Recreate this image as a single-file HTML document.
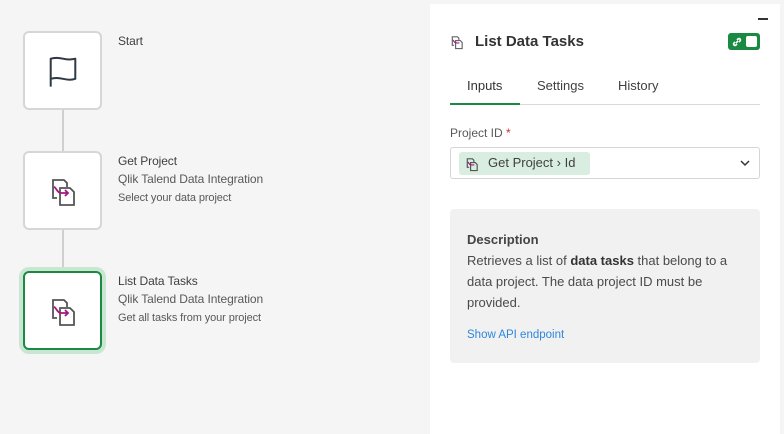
<!DOCTYPE html>
<html><head><style>
*{margin:0;padding:0;box-sizing:border-box}
body{width:784px;height:429px;background:#f5f5f5;font-family:"Liberation Sans",sans-serif;position:relative;overflow:hidden;color:#404040}
.box{position:absolute;left:23px;width:79px;height:79px;background:#fff;border:2px solid #d6d6d6;border-radius:6px;display:flex;align-items:center;justify-content:center}
.sel{border:2px solid #1a8a43;box-shadow:0 0 0 4px #c9e6d3}
.line{position:absolute;left:62px;width:2px;background:#cfcfcf}
.t{position:absolute;left:118px;font-size:12px;line-height:18px;color:#595959;letter-spacing:-0.1px}
.t b{color:#404040;font-weight:normal}
.panel{position:absolute;left:430px;top:4px;width:350px;height:430px;background:#fff}
.abs{position:absolute}
</style></head><body>
<div class="line" style="top:110px;height:42px"></div>
<div class="line" style="top:230px;height:42px"></div>
<div class="box" style="top:31px"><svg width="38" height="38" viewBox="0 0 34 34" fill="none" stroke="#2f3a45" stroke-width="1.8" stroke-linejoin="round"><path d="M6 31V6c3-1 7-1 11 0s7 1 11 0v18c-3 1-7 1-11 0s-8-1-11 0"/></svg></div>
<div class="box" style="top:151px"><svg width="34" height="34" viewBox="0 0 34 34" fill="none" stroke-width="1.8"><path d="M11 24H7V6h11l3 3v4" stroke="#555"/><path d="M14 14h10l4 4v13H14z" stroke="#555"/><path d="M8 13c2 0 3 6 7 6h7m-3-3 3 3-3 3" stroke="#a3177f"/></svg></div>
<div class="box sel" style="top:271px"><svg width="34" height="34" viewBox="0 0 34 34" fill="none" stroke-width="1.8"><path d="M11 24H7V6h11l3 3v4" stroke="#555"/><path d="M14 14h10l4 4v13H14z" stroke="#555"/><path d="M8 13c2 0 3 6 7 6h7m-3-3 3 3-3 3" stroke="#a3177f"/></svg></div>
<div class="t" style="top:32px"><b>Start</b></div>
<div class="t" style="top:152px"><b>Get Project</b><br>Qlik Talend Data Integration<br><span style="font-size:11px">Select your data project</span></div>
<div class="t" style="top:272px"><b>List Data Tasks</b><br>Qlik Talend Data Integration<br><span style="font-size:11px">Get all tasks from your project</span></div>

<div class="panel">
<div class="abs" style="left:328px;top:14px;width:10px;height:1.5px;background:#333"></div>
<svg class="abs" style="left:19px;top:30px" width="16" height="16" viewBox="0 0 34 34" fill="none" stroke-width="2.5"><path d="M11 24H7V6h11l3 3v4" stroke="#666"/><path d="M14 14h10l4 4v13H14z" stroke="#666"/><path d="M8 13c2 0 3 6 7 6h7" stroke="#a3177f"/></svg>
<div class="abs" style="left:45px;top:29px;font-size:15px;font-weight:bold;color:#333">List Data Tasks</div>
<div class="abs" style="left:298px;top:29px;width:32px;height:17px;background:#1a8a43;border-radius:3px"><svg style="position:absolute;left:4px;top:4px" width="10" height="10" viewBox="0 0 10 10" fill="none" stroke="#fff" stroke-width="1.6"><path d="M4 6l2-2M3 5 2 6a1.4 1.4 0 0 0 2 2l1-1M5 3l1-1a1.4 1.4 0 0 1 2 2L7 5"/></svg><div style="position:absolute;right:3px;top:3px;width:11px;height:11px;background:#fff;border-radius:2px"></div></div>
<div class="abs" style="left:37px;top:74px;font-size:13px;color:#333">Inputs</div>
<div class="abs" style="left:107px;top:74px;font-size:13px;color:#404040">Settings</div>
<div class="abs" style="left:188px;top:74px;font-size:13px;color:#404040">History</div>
<div class="abs" style="left:20px;top:100px;width:310px;height:1px;background:#d9d9d9"></div>
<div class="abs" style="left:20px;top:99px;width:70px;height:2px;background:#1a8a43"></div>
<div class="abs" style="left:20px;top:122px;font-size:12px;color:#595959">Project ID <span style="color:#d0312d">*</span></div>
<div class="abs" style="left:20px;top:143px;width:310px;height:32px;border:1px solid #d6d6d6;border-radius:3px"></div>
<div class="abs" style="left:29px;top:148px;width:131px;height:23px;background:#d9ede1;border-radius:3px"></div>
<svg class="abs" style="left:34px;top:152px" width="16" height="16" viewBox="0 0 34 34" fill="none" stroke-width="2.5"><path d="M11 24H7V6h11l3 3v4" stroke="#555"/><path d="M14 14h10l4 4v13H14z" stroke="#555"/><path d="M8 13c2 0 3 6 7 6h7" stroke="#a3177f"/></svg>
<div class="abs" style="left:58px;top:151px;font-size:13px;color:#404040">Get Project &#x203A; Id</div>
<svg class="abs" style="left:310px;top:155px" width="10" height="8" viewBox="0 0 10 8"><path d="M1 2l4 4 4-4" stroke="#333" stroke-width="1.5" fill="none"/></svg>
<div class="abs" style="left:20px;top:205px;width:310px;height:154px;background:#f1f1f1;border-radius:4px"></div>
<div class="abs" style="left:37px;top:225px;width:268px;font-size:13px;line-height:21px;color:#4a4a4a"><b style="color:#444">Description</b><br>Retrieves a list of <b style="color:#333">data tasks</b> that belong to a data project. The data project ID must be provided.</div>
<div class="abs" style="left:37px;top:325px;font-size:11.5px;color:#2e86de">Show API endpoint</div>
</div>
</body></html>
